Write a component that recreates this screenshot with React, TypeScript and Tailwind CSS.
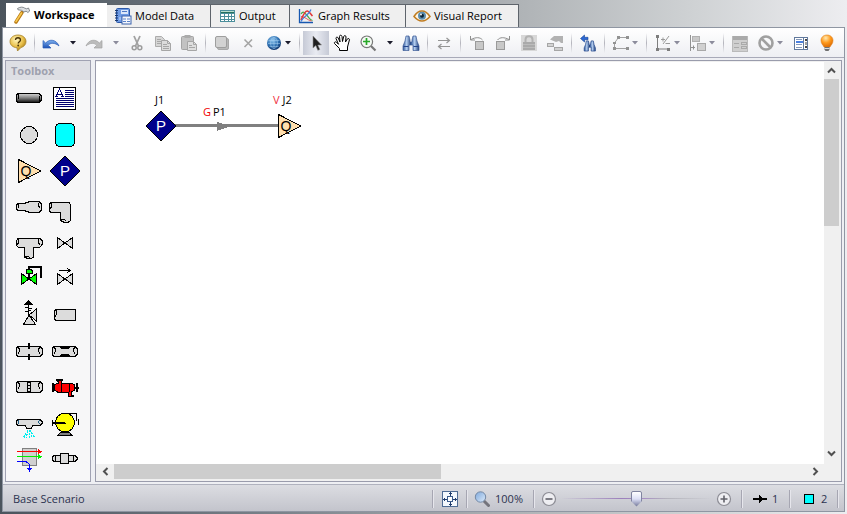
import { useState, type ReactNode } from "react";
import clsx from "clsx";

type IconProps = { children: ReactNode; size?: number; crisp?: boolean };

function Icon({ children, size = 18, crisp }: IconProps) {
  return (
    <svg
      width={size}
      height={size}
      viewBox={`0 0 ${size} ${size}`}
      fill="none"
      shapeRendering={crisp ? "crispEdges" : "auto"}
      className="block shrink-0"
      aria-hidden="true"
    >
      {children}
    </svg>
  );
}

// Shared gradients, referenced by id from the icons below.
function Gradients() {
  return (
    <svg width="0" height="0" className="absolute" aria-hidden="true">
      <defs>
        <radialGradient id="gold" cx="0.4" cy="0.3" r="0.7">
          <stop offset="0" stopColor="#fff6c0" />
          <stop offset="0.6" stopColor="#e9c04a" />
          <stop offset="1" stopColor="#a87a14" />
        </radialGradient>
        <radialGradient id="earth" cx="0.4" cy="0.3" r="0.75">
          <stop offset="0" stopColor="#8cc4ee" />
          <stop offset="0.6" stopColor="#2a6cae" />
          <stop offset="1" stopColor="#0c2c60" />
        </radialGradient>
        <radialGradient id="bulb" cx="0.4" cy="0.25" r="0.8">
          <stop offset="0" stopColor="#ffe9b0" />
          <stop offset="0.5" stopColor="#ff9a1c" />
          <stop offset="1" stopColor="#d86400" />
        </radialGradient>
        <linearGradient id="blue" x1="0" y1="0" x2="0" y2="1">
          <stop offset="0" stopColor="#7fb2f0" />
          <stop offset="1" stopColor="#1c50b4" />
        </linearGradient>
        <linearGradient id="binoc" x1="0" y1="0" x2="0.5" y2="0" spreadMethod="repeat">
          <stop offset="0" stopColor="#2c5498" />
          <stop offset="0.45" stopColor="#b4cef0" />
          <stop offset="1" stopColor="#1c3c78" />
        </linearGradient>
        <linearGradient id="tube" x1="0" y1="0" x2="0" y2="1">
          <stop offset="0" stopColor="#d8d8d8" />
          <stop offset="0.5" stopColor="#808080" />
          <stop offset="1" stopColor="#101010" />
        </linearGradient>
        <linearGradient id="lens" x1="0" y1="0" x2="1" y2="1">
          <stop offset="0" stopColor="#7ea8dc" />
          <stop offset="1" stopColor="#dcebfa" />
        </linearGradient>
      </defs>
    </svg>
  );
}

/* ---------- tab icons ---------- */

const hammer = (
  <Icon>
    <path d="M3 16 9 6.500" stroke="#b87a14" strokeWidth="3.400" strokeLinecap="round" />
    <path d="M3 15.500 8.500 7" stroke="#f8c850" strokeWidth="1.600" strokeLinecap="round" />
    <path d="M4.500 2.500C7 .8 10 .8 11.500 2l2 .8 2-.8 1.200 3-1.800 1.500-1.800-1.300-2.200.8L8.500 4.300 5 3.800z" fill="#dcdfe2" stroke="#6c7278" strokeWidth=".8" />
  </Icon>
);

const notebook = (
  <Icon>
    <rect x="2.500" y="1.500" width="13" height="14" rx="1" fill="#6d9ae4" stroke="#2c58a8" />
    <path d="M1 3.500h3M1 6h3M1 8.500h3M1 11h3M1 13.500h3" stroke="#183870" />
    <rect x="7" y="3" width="7" height="4" fill="#dbe7fa" />
    <path d="M8 4.500h5" stroke="#4d78c4" />
    <rect x="8" y="9" width="9" height="8" fill="#f4f7fd" stroke="#3a62ac" />
    <path d="M9 12h3m1 0h3M9 14.500h3m1 0h3" stroke="#5a82c8" />
    <path d="M6 10v3" stroke="#cfe0fa" />
  </Icon>
);

const sheet = (
  <Icon crisp>
    <rect x="2" y="3" width="15" height="12" fill="#fff" />
    <path d="M2 3h15v3H2z" fill="#25705f" />
    <path d="M2.500 3.500h14v11h-14zM2 6.500h15M2 9.500h15M2 12.500h15M6.500 6v9M10.500 6v9M13.500 6v9" stroke="#4c8f9c" />
    <path d="M3 4.500h13" stroke="#b7dccd" />
  </Icon>
);

const graph = (
  <Icon>
    <path d="M2.500 2v13.500H16" stroke="#1858b0" strokeWidth="1.300" />
    <path d="M4 7c2.500-4 4-.500 6 1.500s3.500 5 5.500 5" stroke="#48a848" strokeWidth="1.200" />
    <path d="M4 13C6.500 7 8.500 3.500 10.500 4S14.500 8 15.500 9" stroke="#e03838" strokeWidth="1.500" />
    <path d="M4 14.500C8 7 11.500 9 14 2.500" stroke="#3c7ce0" strokeWidth="1.200" />
    <path d="M4 9.500c4 0 6 3.500 10.500 4.500" stroke="#e03838" strokeWidth=".8" />
  </Icon>
);

const eye = (
  <Icon>
    <path d="M1 9.500C4 4.500 7 4 9 4s5 1 8 5.500C14 13 12 14 9 14S4 13 1 9.500z" fill="#fdf6e6" stroke="#c07c20" strokeWidth="1.500" />
    <circle cx="9" cy="8.800" r="4" fill="#5a8cae" />
    <circle cx="9" cy="8.800" r="2" fill="#0c2434" />
    <circle cx="8" cy="7.500" r=".9" fill="#fff" />
  </Icon>
);

/* ---------- toolbar icons ---------- */

const help = (
  <Icon>
    <path d="M9 1c4.500 0 8 2.700 8 6.500 0 3-2 5.300-5 6l-3.500 3.500-.5-3.200C4 13.500 1 11 1 7.500 1 3.700 4.500 1 9 1z" fill="url(#gold)" stroke="#a8842c" strokeWidth=".8" />
    <path d="M6.500 6c0-3 5-3 5 0 0 1.700-2.300 1.800-2.300 3.500" stroke="#4a3408" strokeWidth="1.300" />
    <circle cx="9.200" cy="11.500" r=".9" fill="#4a3408" />
  </Icon>
);

const undo = (
  <Icon>
    <path d="M1 6.500v7.500h8L6.300 11.300c2-2.600 6.700-2.800 10.700.7C14.500 5.500 7.500 4.500 3.700 9z" fill="url(#blue)" stroke="#2a5cb8" strokeWidth=".7" />
  </Icon>
);

const redo = (
  <Icon>
    <path d="M17 6.500v7.500H9l2.700-2.700C9.700 8.700 5 8.500 1 12 3.500 5.500 10.500 4.500 14.300 9z" fill="#bcbcbc" stroke="#a0a0a0" strokeWidth=".7" />
  </Icon>
);

const cut = (
  <Icon>
    <path d="M6 2l4.500 10M12 2 7.500 12" stroke="#a2a2a2" strokeWidth="1.800" />
    <circle cx="6.200" cy="13.700" r="2" stroke="#9c9c9c" strokeWidth="1.500" />
    <circle cx="11.800" cy="13.700" r="2" stroke="#9c9c9c" strokeWidth="1.500" />
  </Icon>
);

const copy = (
  <Icon>
    <path d="M1.500 2.500h6l3 3v7h-9z" fill="#d6d6d6" stroke="#acacac" />
    <path d="M3 5.500h4M3 7.500h5M3 9.500h5" stroke="#a8a8a8" />
    <path d="M7.500 6.500h6l3 3v7h-9z" fill="#dcdcdc" stroke="#a6a6a6" />
    <path d="M13.500 6.500v3h3M9 10.500h4M9 12.500h6M9 14.500h6" stroke="#a6a6a6" />
  </Icon>
);

const paste = (
  <Icon>
    <rect x="1.500" y="2.500" width="12" height="13" rx="1" fill="#c2c2c2" stroke="#a4a4a4" />
    <rect x="4.500" y="1" width="6" height="3" fill="#ababab" />
    <path d="M7.500 7.500h6l3 3v6h-9z" fill="#dedede" stroke="#a6a6a6" />
    <path d="M13.500 7.500v3h3M9 11.500h3M9 13.500h6" stroke="#a6a6a6" />
  </Icon>
);

const frame = (
  <Icon>
    <rect x="4.500" y="4.500" width="11" height="11" rx="1.500" fill="#b8b8b8" stroke="#a8a8a8" />
    <rect x="2.500" y="2.500" width="11" height="11" rx="1.500" fill="#d2d2d2" stroke="#9e9e9e" />
  </Icon>
);

const remove = (
  <Icon>
    <path d="m5.500 5.500 7.500 7.500M13 5.500 5.500 13" stroke="#a4a4a4" strokeWidth="1.600" />
  </Icon>
);

const globe = (
  <Icon>
    <circle cx="9" cy="9" r="7" fill="url(#earth)" />
    <ellipse cx="9" cy="9" rx="3.500" ry="5.500" stroke="#a8d0f0" strokeWidth=".5" />
    <path d="M3.500 6.500h11M3 9.500h12M4.500 12.500h9M9 3.500v11" stroke="#a8d0f0" strokeWidth=".5" />
  </Icon>
);

const pointer = (
  <Icon>
    <path d="M6 2v12l2.800-2.500 2 4.800 2-.8-2-4.500h3.700z" fill="#202020" stroke="#888" strokeWidth=".6" />
  </Icon>
);

const hand = (
  <Icon>
    <path
      d="M6.500 16.500v-2L1.500 9.500c-.6-1.500 1-2.200 2-1.200l2 2L3 4.500c-.3-1.500 1.700-2 2.200-.5L7 8 6.500 2.500c0-1.700 2.200-1.700 2.500 0L9.500 7.500l1.200-5c.5-1.500 2.500-1 2.300.5L12.500 8l1.800-3c.9-1.200 2.500-.3 2.100 1L14.500 13v3.500z"
      fill="#fff"
      stroke="#000"
    />
  </Icon>
);

const zoomIn = (
  <Icon>
    <path d="m12 12 4.500 4.500" stroke="#777" strokeWidth="2.200" />
    <circle cx="7.800" cy="7.800" r="5.800" fill="#f4faf4" stroke="#777" strokeWidth="1.200" />
    <path d="M7.500 4v7M4 7.500h7" stroke="#28a828" strokeWidth="1.700" />
  </Icon>
);

const BINOC_BODY = "M4 2h3l1 4v2h2V6l1-4h3l1 5 2 5v4.500h-6V11H7v5.500H1V12l2-5z";

const binoculars = (
  <Icon>
    <path d={BINOC_BODY} fill="url(#binoc)" stroke="#3c5c98" strokeWidth=".7" />
    <path d="M1.500 12.500h5M11.500 12.500h5" stroke="#24448c" />
  </Icon>
);

const swap = (
  <Icon>
    <path d="M3 6.500h11M11.500 4l3 2.500-3 2.500M15 12.500H4M6.500 10l-3 2.500 3 2.500" stroke="#959595" strokeWidth="1.200" />
  </Icon>
);

const rotateLeft = (
  <Icon>
    <rect x="7.500" y="7.500" width="8" height="8" fill="#c8c8c8" stroke="#9a9a9a" />
    <path d="M14.500 6C12 3 8 3 3 5.500M2.500 2v4H7" stroke="#8e8e8e" />
  </Icon>
);

const rotateRight = (
  <Icon>
    <rect x="2.500" y="7.500" width="8" height="8" fill="#c8c8c8" stroke="#9a9a9a" />
    <path d="M3.500 6C6 3 10 3 15 5.500M15.500 2v4H11" stroke="#8e8e8e" />
  </Icon>
);

const lock = (
  <Icon>
    <rect x="1" y="1" width="16" height="16" fill="#d8d8d8" />
    <path d="M5.500 8V5.500c0-4.500 7-4.500 7 0V8" stroke="#b2b2b2" strokeWidth="2" />
    <rect x="3" y="8" width="12" height="8" fill="#aaa" />
    <path d="M3 10.500h12M3 13.500h12" stroke="#bcbcbc" />
  </Icon>
);

const stack = (
  <Icon>
    <path d="M4 5.500 8 2h9v7h-2l-2-2-3 1z" fill="#b2b2b2" />
    <rect x="1.500" y="9.500" width="6" height="3" fill="#d4d4d4" stroke="#a6a6a6" />
    <rect x="8.500" y="13.500" width="8" height="3" fill="#d0d0d0" stroke="#a6a6a6" />
  </Icon>
);

const findPrevious = (
  <Icon>
    <path d="M1.500 4.500 5.500 1v2.300H9v2.400H5.500V8z" fill="#2c68d4" stroke="#174494" strokeWidth=".6" />
    <g transform="translate(4.500 5.500) scale(.7)">
      <path d={BINOC_BODY} fill="url(#binoc)" stroke="#24488c" />
    </g>
  </Icon>
);

const polyline = (
  <Icon>
    <path d="M16 3.500H6.500L2.500 9v5.500H15" stroke="#a2a2a2" />
    <path d="M14 2h3v3h-3zM5 2h3v3H5zM1 13h3v3H1zM14 13h3v3h-3zM1 8h3v2H1z" fill="#929292" />
  </Icon>
);

const axes = (
  <Icon>
    <path d="M3.500 3v12H16" stroke="#7e7e7e" />
    <path d="M2 1h3v3H2zM2 14h3v3H2zM13 14h3v3h-3z" fill="#7e7e7e" />
    <path d="M7 5.500h4M9 3.500v4M9 10l6-8M11.500 9.500H16" stroke="#9a9a9a" />
  </Icon>
);

const align = (
  <Icon>
    <path d="M1.500 1v16M2 13.500h4M4.500 11.500v4" stroke="#929292" />
    <rect x="3.500" y="2.500" width="7" height="5" fill="#c8c8c8" stroke="#b0b0b0" />
    <rect x="8.500" y="9.500" width="8" height="7" fill="#d0d0d0" stroke="#a8a8a8" />
  </Icon>
);

const form = (
  <Icon crisp>
    <rect x="1" y="2" width="16" height="15" fill="#cfcfcf" />
    <path d="M1 2h16v4H1z" fill="#aaa" />
    <path d="M3 9.500h5M3 13.500h5M10.500 8.500h5v2h-5zM10.500 12.500h5v2h-5z" stroke="#aaa" />
    <path d="M1.500 2v15h15V2" stroke="#bababa" />
  </Icon>
);

const blocked = (
  <Icon>
    <circle cx="9" cy="9" r="6.500" stroke="#a0a0a0" strokeWidth="2.600" />
    <path d="m5 5 8 8" stroke="#a0a0a0" strokeWidth="2.600" />
  </Icon>
);

const list = (
  <Icon crisp>
    <path d="M2.500 3.500h13v12h-13z" fill="#fff" stroke="#60789c" />
    <path d="M4 5.500h6M4 10.500h6M4 13.500h6" stroke="#8498b8" />
    <path d="M4 7h7v2H4z" fill="#4a80e0" />
    <path d="M11.500 3v13" stroke="#60789c" />
    <path d="M13 5h2v2h-2zM13 12h2v2h-2z" fill="#444" />
    <path d="M13 8h2v3h-2z" fill="#a0a0a0" />
  </Icon>
);

const bulb = (
  <Icon>
    <path d="M9 1c3.800 0 6 2.500 6 5.500 0 3-2 4.500-3 6.500H6C5 11 3 9.500 3 6.500 3 3.500 5.200 1 9 1z" fill="url(#bulb)" stroke="#e08018" strokeWidth=".6" />
    <path d="M6.500 13h5v2.500l-1 1.500h-3l-1-1.500z" fill="#707070" />
    <path d="M6.500 14.500h5" stroke="#ddd" />
  </Icon>
);

type ToolItem =
  | { kind: "sep" }
  | { kind: "button"; label: string; icon: ReactNode; active?: boolean }
  | { kind: "split"; label: string; icon: ReactNode; muted?: boolean }
  | { kind: "caret"; label: string; muted?: boolean };

const TOOLS: ToolItem[] = [
  { kind: "button", label: "Help", icon: help },
  { kind: "sep" },
  { kind: "button", label: "Undo", icon: undo },
  { kind: "caret", label: "Undo history" },
  { kind: "button", label: "Redo", icon: redo },
  { kind: "caret", label: "Redo history", muted: true },
  { kind: "button", label: "Cut", icon: cut },
  { kind: "button", label: "Copy", icon: copy },
  { kind: "button", label: "Paste", icon: paste },
  { kind: "sep" },
  { kind: "button", label: "Duplicate", icon: frame },
  { kind: "button", label: "Delete", icon: remove },
  { kind: "split", label: "Global edit", icon: globe },
  { kind: "sep" },
  { kind: "button", label: "Select", icon: pointer, active: true },
  { kind: "button", label: "Pan", icon: hand },
  { kind: "button", label: "Zoom in", icon: zoomIn },
  { kind: "caret", label: "Zoom options" },
  { kind: "button", label: "Find", icon: binoculars },
  { kind: "sep" },
  { kind: "button", label: "Reverse direction", icon: swap },
  { kind: "sep" },
  { kind: "button", label: "Rotate left", icon: rotateLeft },
  { kind: "button", label: "Rotate right", icon: rotateRight },
  { kind: "button", label: "Lock", icon: lock },
  { kind: "button", label: "Renumber", icon: stack },
  { kind: "sep" },
  { kind: "button", label: "Find previous", icon: findPrevious },
  { kind: "sep" },
  { kind: "split", label: "Segment", icon: polyline, muted: true },
  { kind: "sep" },
  { kind: "split", label: "Scale", icon: axes, muted: true },
  { kind: "split", label: "Align", icon: align, muted: true },
  { kind: "sep" },
  { kind: "button", label: "Properties", icon: form },
  { kind: "split", label: "Special conditions", icon: blocked, muted: true },
  { kind: "button", label: "Inspect", icon: list },
  { kind: "button", label: "Tips", icon: bulb },
];

function Caret({ muted }: { muted?: boolean }) {
  return (
    <svg width="6" height="4" viewBox="0 0 6 4" className="block shrink-0" aria-hidden="true">
      <path d="M0 0h6L3 3.500z" fill={muted ? "#8c8c9c" : "#1c1c2c"} />
    </svg>
  );
}

function Separator() {
  return (
    <span className="flex h-5 w-[7px] shrink-0 justify-center">
      <span className="w-px bg-linear-to-b from-transparent via-[#b4b4bc] to-transparent" />
    </span>
  );
}

function Toolbar() {
  return (
    <div
      role="toolbar"
      aria-label="Main"
      className="flex h-[30px] items-center overflow-hidden border-b border-[#a8aab8] bg-linear-to-b from-white to-[#eeeff3] pl-0.5"
    >
      {TOOLS.map((tool, i) => {
        if (tool.kind === "sep") return <Separator key={i} />;
        if (tool.kind === "caret")
          return (
            <button key={i} aria-label={tool.label} className="flex h-6 w-[17px] shrink-0 items-center justify-center">
              <Caret muted={tool.muted} />
            </button>
          );
        if (tool.kind === "split")
          return (
            <button key={i} aria-label={tool.label} className="flex h-6 w-[35px] shrink-0 items-center gap-0.5 pl-1">
              {tool.icon}
              <Caret muted={tool.muted} />
            </button>
          );
        return (
          <button
            key={i}
            aria-label={tool.label}
            className={clsx(
              "flex h-6 w-[26px] shrink-0 items-center justify-center",
              tool.active && "bg-linear-to-r from-[#c6cad6] via-[#e9ebf2] to-[#c6cad6]",
            )}
          >
            {tool.icon}
          </button>
        );
      })}
    </div>
  );
}

/* ---------- toolbox ---------- */

function Assigned() {
  return (
    <>
      <path d="M3 19 18 4l15 15-15 15z" fill="#00008b" stroke="#000" />
      <text x="18" y="24" textAnchor="middle" fill="#fff" className="font-['Liberation_Sans',sans-serif] text-[15px]">P</text>
    </>
  );
}

function Flow() {
  return (
    <>
      <path d="M7.500 7.500v23L30 19z" fill="#ffdead" stroke="#000" />
      <text x="15" y="24" textAnchor="middle" fill="#000" className="font-['Liberation_Sans',sans-serif] text-[14px]">Q</text>
    </>
  );
}

const PART = "#dcdcdc";

const PARTS: { label: string; art: ReactNode }[] = [
  {
    label: "Pipe",
    art: (
      <>
        <path d="M7 13.500h21l2 2v5l-2 2H7l-2-2v-5z" fill="url(#tube)" stroke="#000" />
        <path d="M7 14v5M28 16v5" stroke="#000" />
      </>
    ),
  },
  {
    label: "Annotation",
    art: (
      <>
        <path d="M6.500 7.500h22v22h-22z" fill="#fff" stroke="#000" />
        <path d="M18 10.500h9M18 12.500h9M18 14.500h9M18 16.500h9M9 18.500h18M9 20.500h18M9 22.500h18M9 24.500h18M9 26.500h18" stroke="#000070" />
        <path d="m9 16.500 3.500-7.500 3.500 7.500M10 14h5M8 16.500h3M14 16.500h3" stroke="#000070" />
      </>
    ),
  },
  { label: "Branch", art: <circle cx="18" cy="19" r="8.500" fill={PART} stroke="#000" /> },
  {
    label: "Reservoir",
    art: <path d="M12 7.500h12l2 1 1.500 2.500v16l-1.500 2.500-2 1H12l-2-1L8.500 27V11L10 8.500z" fill="#0ff" stroke="#000" />,
  },
  { label: "Assigned Flow", art: <Flow /> },
  { label: "Assigned Pressure", art: <Assigned /> },
  {
    label: "Area Change",
    art: (
      <>
        <path d="M7 15.500h6l6-2h9l2 2v7l-2 2h-9l-6-2H7l-2-2v-3z" fill={PART} stroke="#000" />
        <path d="m7 16 1 2-1 2M28 15l-1 2 2 3" stroke="#000" />
      </>
    ),
  },
  {
    label: "Bend",
    art: (
      <>
        <path d="M4 14.500h18l1.500 2v16l-2 1.500h-5l-3-1.500v-8H4l-2-2v-6z" fill={PART} stroke="#000" />
        <path d="m4 15 1 3-2 3M14 32l3-1 2 2" stroke="#000" />
      </>
    ),
  },
  {
    label: "Tee",
    art: (
      <>
        <path d="M7 14.500h22l2 2v4l-2 2.500h-6.500v10l-2 1.500h-4L13.500 33V23H7l-2-2v-4z" fill={PART} stroke="#000" />
        <path d="m7 15 1 3-2 3M28 15l-1 3 2 3M14 33l3-1 2 2" stroke="#000" />
      </>
    ),
  },
  {
    label: "Valve",
    art: <path d="M10.500 13.500v11l15-11v11z" fill={PART} stroke="#000" />,
  },
  {
    label: "Control Valve",
    art: (
      <>
        <path d="M10.500 13.500v11l15-11v11z" fill="#0f0" stroke="#000" />
        <path d="M18 19V7h12v11" stroke="#000" strokeWidth="2" />
        <path d="M15 13.500v-3l1.500-1.500h3l1.500 1.500v3z" fill="#0f0" stroke="#000" />
      </>
    ),
  },
  {
    label: "Check Valve",
    art: (
      <>
        <path d="M10.500 13.500v11l15-11v11z" fill={PART} stroke="#000" />
        <path d="M12 10.500h11M20 8l3 2.500-3 2.500" stroke="#000" />
      </>
    ),
  },
  {
    label: "Relief Valve",
    art: (
      <>
        <path d="M18 19 12.500 28.500h12zM18 19l7.500-6v12z" fill={PART} stroke="#000" />
        <path d="M17.500 19V7M14 11l7 2M14 16l6-2" stroke="#000" />
        <path d="m17.500 4 5 5h-10z" fill="#000" />
      </>
    ),
  },
  {
    label: "Dead End",
    art: (
      <>
        <path d="M9 13.500h19.500v11H9l-2-2v-7z" fill={PART} stroke="#000" />
        <path d="m9 14 1 3-2 4" stroke="#000" />
      </>
    ),
  },
  {
    label: "Orifice",
    art: (
      <>
        <path d="M7 14.500h22l2 2v6l-2 2H7l-2-2v-6z" fill={PART} stroke="#000" />
        <path d="m7 15 2 3-2 4M29 15l-2 3 2 4" stroke="#000" />
        <path d="M18 11v6M18 22v6" stroke="#000" strokeWidth="2" />
      </>
    ),
  },
  {
    label: "Venturi",
    art: (
      <>
        <path d="M7 14.500h21l2 2v6l-2 2H7l-2-2v-6z" fill={PART} stroke="#000" />
        <path d="m7 15 2 3-2 4M28 15l-2 3 2 4" stroke="#000" />
        <path d="M11 14h14l-4 3h-6zM11 25h14l-4-3h-6z" fill="#000" />
      </>
    ),
  },
  {
    label: "Screen",
    art: (
      <>
        <path d="M7 13.500h22l2 2v7l-2 2H7l-2-2v-7z" fill={PART} stroke="#000" />
        <path d="m7 14 2 3-2 4M29 14l-2 3 2 4M16.500 14v11M19.500 14v11" stroke="#000" />
        <path d="M18 14v11" stroke="#000" strokeWidth="2" strokeDasharray="1 2" />
      </>
    ),
  },
  {
    label: "Heat Exchanger",
    art: (
      <>
        <path d="M6 15v9M30 15v9M9 11.500h7M21 27.500h6" stroke="#000" strokeWidth="2" />
        <path d="M5 19.500h27" stroke="#000" strokeWidth="2" />
        <path d="M10.500 12h4v3h10l3 2v5l-3 2v4h-3v-4h-11l-3-2v-5l3-2h1z" fill="#f00" stroke="#000" />
        <path d="M14.500 15v9M22.500 15v9" stroke="#000" />
      </>
    ),
  },
  {
    label: "Spray Discharge",
    art: (
      <>
        <path d="M7 15.500h22l2 2v2l-2 2h-7l-2 3h-4l-2-3H7l-2-2v-2z" fill={PART} stroke="#000" />
        <path d="m7 16 1 2-1 2M29 16l-2 2 2 2" stroke="#1c5c84" />
        <path d="m17 26-5 8M18 26v8M19 26l5 8M15 29l-2 5M17 27l-2 7M20 28l1 6" stroke="#0ee" strokeDasharray="2 1" />
      </>
    ),
  },
  {
    label: "Pump",
    art: (
      <>
        <path d="M14 28h8l3 3.500H11z" fill="#808080" stroke="#000" />
        <circle cx="18" cy="18.500" r="9.500" fill="#ff0" stroke="#000" />
        <path d="M5 19h14M5.500 16v6M18 9.500h12M29.500 9v8M31.500 15v6" stroke="#000" />
        <path d="M5 19h13" stroke="#000" strokeWidth="2" />
      </>
    ),
  },
  {
    label: "Volume Balance",
    art: (
      <>
        <path d="M11.500 8.500h14v17h-14z" fill="#d0d0d0" stroke="#808080" />
        <path d="M6 11.500h22" stroke="#f00" />
        <path d="m27 9 4 2.500-4 3z" fill="#f00" />
        <path d="M6 16.500h22" stroke="#0e0" />
        <path d="m27 14 4 2.500-4 3z" fill="#0e0" />
        <path d="M6 21.500h9l3.500 3V29" stroke="#00f" />
        <path d="M16 28h5l-2.500 4z" fill="#00f" />
      </>
    ),
  },
  {
    label: "General Component",
    art: (
      <>
        <path d="M7 15.500h21l2 2v2l-2 2H7l-2-2v-2z" fill={PART} stroke="#000" />
        <path d="M13.500 13.500h8v10h-8z" fill={PART} stroke="#000" />
        <path d="m8 16 1 3-1 2M27 16l-1 3 1 2" stroke="#000" />
      </>
    ),
  },
];

function Toolbox() {
  return (
    <aside className="w-[86px] shrink-0 border border-[#a0a2b2] bg-[#f7f7f8]">
      <h2 className="h-[19px] bg-[#dedfe4] pl-[5px] text-[11px] leading-[20px] font-bold text-[#9ea1ae]">Toolbox</h2>
      <div className="grid grid-cols-[36px_36px] px-[5px]">
        {PARTS.map((part) => (
          <button key={part.label} aria-label={part.label} className="size-9">
            <Icon size={36} crisp>{part.art}</Icon>
          </button>
        ))}
      </div>
    </aside>
  );
}

/* ---------- workspace ---------- */

function Chevron({ d }: { d: string }) {
  return (
    <svg width="9" height="9" viewBox="0 0 9 9" fill="none" aria-hidden="true">
      <path d={d} stroke="#505050" strokeWidth="2" />
    </svg>
  );
}

function Canvas() {
  return (
    <div className="relative overflow-hidden bg-white">
      <svg width="240" height="100" fill="none" shapeRendering="crispEdges" className="absolute top-0 left-0" aria-hidden="true">
        <path d="M79 63.500h104" stroke="#808080" strokeWidth="3" />
        <path d="m121 60 14 4-14 5z" fill="#808080" />
        <g transform="translate(47 45)"><Assigned /></g>
        <g transform="translate(175 45)"><Flow /></g>
      </svg>
      <span className="absolute top-[30px] left-[59px]">J1</span>
      <span className="absolute top-[42px] left-[107px] flex gap-0.5">
        <span className="text-[#f00000]">G</span>
        <span>P1</span>
      </span>
      <span className="absolute top-[30px] left-[177px] flex gap-[3px]">
        <span className="text-[#f03040]">V</span>
        <span>J2</span>
      </span>
    </div>
  );
}

function Workspace() {
  return (
    <main className="grid min-w-0 flex-1 grid-cols-[1fr_15px] grid-rows-[1fr_15px] border border-[#9a9cac] bg-[#f0f0f0] pt-px pr-0.5 pb-0.5">
      <Canvas />
      <div className="flex flex-col items-center pb-0.5">
        <button aria-label="Scroll up" className="flex h-[17px] w-full items-center justify-center">
          <Chevron d="m1 6.500 3.500-3.500L8 6.500" />
        </button>
        <div className="h-[147px] w-full bg-[#cdcdcd]" />
        <button aria-label="Scroll down" className="mt-auto flex h-[17px] w-full items-center justify-center">
          <Chevron d="m1 2.500 3.500 3.500L8 2.500" />
        </button>
      </div>
      <div className="flex items-center">
        <button aria-label="Scroll left" className="flex h-full w-[18px] items-center justify-center">
          <Chevron d="M6.500 1 3 4.500 6.500 8" />
        </button>
        <div className="h-full w-[327px] bg-[#cdcdcd]" />
        <button aria-label="Scroll right" className="ml-auto flex h-full w-[18px] items-center justify-center">
          <Chevron d="M2.500 1 6 4.500 2.500 8" />
        </button>
      </div>
      <div />
    </main>
  );
}

/* ---------- status bar ---------- */

function StatusSeparator() {
  return <span className="h-[18px] w-0.5 shrink-0 border-l border-[#a6a6b2] bg-[#e6e6ec]" />;
}

function RoundButton({ label, d }: { label: string; d: string }) {
  return (
    <button aria-label={label} className="shrink-0">
      <Icon size={16}>
        <circle cx="8" cy="8" r="6.500" fill="#eeeef2" stroke="#8c8c94" strokeWidth="1.200" />
        <path d={d} stroke="#606068" strokeWidth="1.600" />
      </Icon>
    </button>
  );
}

function StatusBar() {
  const [zoom, setZoom] = useState(100);
  return (
    <footer className="flex h-[27px] items-center border-t border-[#b0b2be] bg-linear-to-b from-[#dcdde2] to-[#c3c4cc] pt-px pr-[5px] pl-2.5 text-[#2c3350]">
      <span className="mr-auto">Base Scenario</span>
      <StatusSeparator />
      <button aria-label="Fit to window" className="mx-2 shrink-0">
        <Icon size={16} crisp>
          <path d="M.5.5h15v15H.5z" fill="#f4f8fd" stroke="#506c94" />
          <path d="M5.500 5.500h5v5h-5z" fill="#fff" stroke="#3c5c8c" />
          <path d="M8 1v4M8 11v4M1 8h4M11 8h4M7 2.500h3M7 13.500h3M2.500 7v3M13.500 7v3" stroke="#203c6c" />
        </Icon>
      </button>
      <StatusSeparator />
      <button className="flex w-[65px] shrink-0 items-center gap-[5px] pl-1.5">
        <Icon size={16}>
          <path d="m10 10 4.500 4.500" stroke="#74747c" strokeWidth="3" strokeLinecap="round" />
          <circle cx="6.500" cy="6" r="5.200" fill="url(#lens)" stroke="#7488a4" />
        </Icon>
        {zoom}%
      </button>
      <StatusSeparator />
      <div className="flex w-[206px] shrink-0 items-center gap-1 pr-[9px] pl-[6px]">
        <RoundButton label="Zoom out" d="M4.500 8h7" />
        <input
          type="range"
          aria-label="Zoom"
          min={0}
          max={200}
          value={zoom}
          onChange={(e) => setZoom(Number(e.target.value))}
          className="h-4 min-w-0 flex-1 appearance-none bg-[linear-gradient(to_right,transparent,#9c80bc_40%,#a890c4_55%,#b4b4bc_70%,transparent)] bg-size-[100%_1px] bg-center bg-no-repeat [&::-webkit-slider-thumb]:h-4 [&::-webkit-slider-thumb]:w-[11px] [&::-webkit-slider-thumb]:appearance-none [&::-webkit-slider-thumb]:rounded-t-xs [&::-webkit-slider-thumb]:border [&::-webkit-slider-thumb]:border-[#8084a0] [&::-webkit-slider-thumb]:bg-linear-to-b [&::-webkit-slider-thumb]:from-white [&::-webkit-slider-thumb]:via-[#dde0f6] [&::-webkit-slider-thumb]:to-[#7c80a0] [&::-webkit-slider-thumb]:[clip-path:polygon(0_0,100%_0,100%_65%,50%_100%,0_65%)]"
        />
        <RoundButton label="Zoom in" d="M4.500 8h7M8 4.500v7" />
      </div>
      <StatusSeparator />
      <span className="flex w-[46px] shrink-0 items-center gap-[5px] pl-2.5">
        <Icon size={14} crisp>
          <path d="M0 7h14" stroke="#000" strokeWidth="2" />
          <path d="m6 3 5 4-5 4z" fill="#000" />
        </Icon>
        1
      </span>
      <StatusSeparator />
      <span className="flex w-[46px] shrink-0 items-center gap-[7px] pl-[13px]">
        <span className="size-2.5 border border-black bg-[#00ffff]" />
        2
      </span>
      <StatusSeparator />
    </footer>
  );
}

const TABS = [
  { label: "Workspace", icon: hammer, width: "w-[101px]" },
  { label: "Model Data", icon: notebook, width: "w-[104px]" },
  { label: "Output", icon: sheet, width: "w-[79px]" },
  { label: "Graph Results", icon: graph, width: "w-[116px]" },
  { label: "Visual Report", icon: eye, width: "w-[113px]" },
];

export default function App() {
  const [tab, setTab] = useState("Workspace");
  return (
    <div className="flex min-h-screen flex-col bg-[linear-gradient(to_right,#4b545d,#7a828a_33%,#b0b4b7_62%,#cfd2d4_82%,#ededf0)] px-0.5 pt-[3px] pb-0.5 font-['Open_Sans',sans-serif] text-[11px] leading-4 text-black">
      <Gradients />
      <div role="tablist" className="flex h-6 items-end pl-1">
        {TABS.map(({ label, icon, width }) => (
          <button
            key={label}
            role="tab"
            aria-selected={tab === label}
            onClick={() => setTab(label)}
            className={clsx(
              "flex shrink-0 items-center gap-[3px] pl-[7px] whitespace-nowrap",
              width,
              tab === label
                ? "h-6 bg-white font-bold"
                : "h-[23px] border-t border-r border-[#5e646b] bg-[#efefef]",
            )}
          >
            {icon}
            {label}
          </button>
        ))}
      </div>
      <div className="flex flex-1 flex-col border border-[#8f96a2] bg-[#eeeff3]">
        <Toolbar />
        <div className="flex flex-1 gap-1 px-0.5 py-0.5">
          <Toolbox />
          <Workspace />
        </div>
        <StatusBar />
      </div>
    </div>
  );
}
